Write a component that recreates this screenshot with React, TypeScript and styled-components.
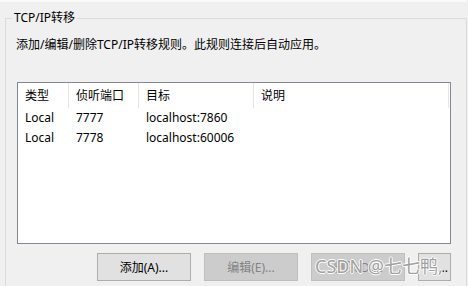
import React from "react";
import styled, { createGlobalStyle } from "styled-components";

const Global = createGlobalStyle`
  html, body { margin: 0; padding: 0; }
  body {
    background: #f0f0f0;
    font-family: "Noto Sans", "Noto Sans CJK SC", sans-serif;
    font-size: 12px;
    color: #000;
  }
`;

const Page = styled.div`
  position: relative;
  width: 468px;
  height: 286px;
  overflow: hidden;
  background: #f0f0f0;
`;

const TopStrip = styled.div`
  height: 2px;
  width: 466px;
  background: #fafafa;
`;

const GroupBox = styled.fieldset`
  margin: 8px 0 0 5px;
  width: 462px;
  box-sizing: border-box;
  height: 320px;
  border: 1px solid #dcdcdc;
  padding: 11px 10px 0 10px;
  min-width: 0;
`;

const Legend = styled.legend`
  margin-left: -4px;
  padding: 0 2px;
  line-height: 16px;
  font-size: 12px;
`;

const Description = styled.div`
  line-height: 16px;
  white-space: nowrap;
`;

const ListBox = styled.div`
  margin: 29px 0 0 1px;
  width: 434px;
  height: 162px;
  box-sizing: border-box;
  border: 1px solid #828790;
  background: #fff;
`;

const Row = styled.div<{ $header?: boolean }>`
  display: grid;
  grid-template-columns: 51px 70px 115px 195px;
  height: ${(p) => (p.$header ? "25px" : "20px")};
  align-items: center;
  line-height: 16px;
`;

const Cell = styled.div<{ $header?: boolean }>`
  height: 100%;
  display: flex;
  align-items: center;
  padding-left: 7px;
  box-sizing: border-box;
  white-space: nowrap;
  border-right: ${(p) => (p.$header ? "1px solid #e5e5e5" : "1px solid transparent")};
`;

const ButtonRow = styled.div`
  display: flex;
  gap: 13px;
  margin: 9px 0 0 81px;
`;

const Button = styled.button<{ $w?: number; $right?: boolean }>`
  width: ${(p) => p.$w ?? 94}px;
  height: 28px;
  box-sizing: border-box;
  border: 1px solid #adadad;
  background: #e1e1e1;
  color: #000;
  font-family: inherit;
  font-size: 12px;
  padding: 0 ${(p) => (p.$right ? "2px" : "0")} 0 0;
  display: flex;
  align-items: center;
  justify-content: ${(p) => (p.$right ? "flex-end" : "center")};
  &:disabled {
    background: #cccccc;
    border-color: #bfbfbf;
    color: #838383;
  }
`;

const Watermark = styled.div`
  position: absolute;
  left: 315px;
  top: 255px;
  font-family: "Noto Sans", "Noto Sans CJK SC", sans-serif;
  font-size: 18px;
  line-height: 22px;
  color: #a0a0a0;
  white-space: nowrap;
  text-shadow: 1px 0 0 #fff, -1px 0 0 #fff, 0 1px 0 #fff, 0 -1px 0 #fff;
  pointer-events: none;
`;

const columns = ["类型", "侦听端口", "目标", "说明"];
const rows = [
  ["Local", "7777", "localhost:7860", ""],
  ["Local", "7778", "localhost:60006", ""],
];

export default function App() {
  return (
    <Page>
      <Global />
      <TopStrip />
      <GroupBox>
        <Legend>TCP/IP转移</Legend>
        <Description>添加/编辑/删除TCP/IP转移规则。此规则连接后自动应用。</Description>
        <ListBox>
          <Row $header>
            {columns.map((c) => (
              <Cell $header key={c}>{c}</Cell>
            ))}
          </Row>
          {rows.map((r, i) => (
            <Row key={i}>
              {r.map((c, j) => (
                <Cell key={j}>{c}</Cell>
              ))}
            </Row>
          ))}
        </ListBox>
        <ButtonRow>
          <Button>添加(A)...</Button>
          <Button disabled>编辑(E)...</Button>
          <Button disabled>删除(D)...</Button>
          <Button $w={33} $right>...</Button>
        </ButtonRow>
      </GroupBox>
      <Watermark>CSDN @七七鸭,</Watermark>
    </Page>
  );
}
